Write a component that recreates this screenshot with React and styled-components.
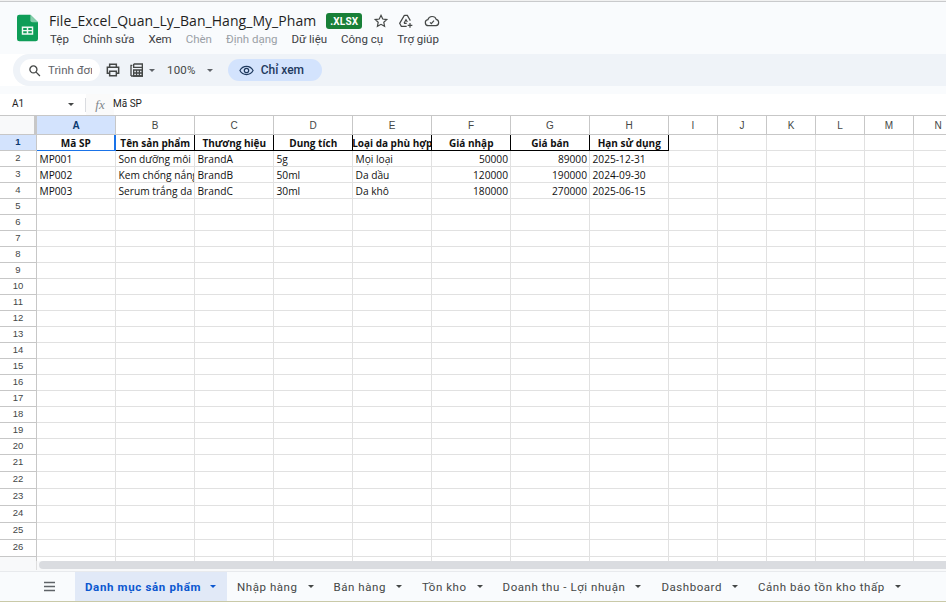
import React from 'react';
import styled, { createGlobalStyle } from 'styled-components';

const Global = createGlobalStyle`
  html, body { margin: 0; padding: 0; width: 946px; height: 602px; overflow: hidden; background: #fff; }
  * { box-sizing: border-box; }
  body { font-family: Roboto, "Liberation Sans", sans-serif; }
`;

const Page = styled.div`
  width: 946px; height: 602px; display: flex; flex-direction: column; overflow: hidden;
  border-top: 1px solid #f1f1f1; border-bottom: 1px solid #c9c9a8; background: #fff;
`;
const Header = styled.header`
  height: 53px; background: #f9fbfd; display: flex; align-items: flex-start; padding: 10px 0 0 17px; gap: 11px; flex: none;
  border-top: 1px solid #c9cacc;
`;
const Logo = styled.svg` width: 21px; height: 28px; flex: none; margin-top: 2px; `;
const TitleBlock = styled.div` display: flex; flex-direction: column; `;
const TitleRow = styled.div` display: flex; align-items: center; height: 18px; `;
const Title = styled.span` color: #1f1f1f; letter-spacing: 0.05px; font-family: "Open Sans", Roboto, sans-serif; font-size: 14px; margin-top: -2px; `;
const Badge = styled.span`
  margin-left: 10px; width: 36px; height: 16px; border-radius: 3px; background: #188038; color: #fff;
  font-size: 10px; font-weight: 700; display: flex; align-items: center; justify-content: center; letter-spacing: .2px;
`;
const TitleIcon = styled.svg` width: 16px; height: 16px; margin-left: ${p => p.$ml}px; flex: none; `;
const Menu = styled.nav` display: flex; gap: 14px; margin-top: 2px; padding-left: 1px; `;
const MenuItem = styled.span` font-size: 11.5px; color: ${p => p.$off ? '#9aa0a6' : '#3c4043'}; line-height: 14px; `;

const Toolbar = styled.div`
  height: 32px; flex: none; margin-left: 13px; background: #eff3f8; border-radius: 16px 0 0 16px;
  display: flex; align-items: center; padding-left: 7px;
`;
const SearchPill = styled.div`
  width: 80px; height: 22px; border-radius: 11px; background: #fff; display: flex; align-items: center; padding-left: 8px; gap: 7px; overflow: hidden;
`;
const SearchText = styled.span` font-size: 11.5px; color: #5f6368; white-space: nowrap; width: 44px; overflow: hidden; `;
const ToolIcon = styled.svg` flex: none; width: 16px; height: 16px; margin-left: ${p => p.$ml || 0}px; `;
const Caret = styled.i`
  display: block; flex: none; width: 0; height: 0; margin-left: ${p => p.$ml || 0}px;
  border-left: ${p => p.$s || 3}px solid transparent; border-right: ${p => p.$s || 3}px solid transparent;
  border-top: ${p => p.$s || 3}px solid ${p => p.$c || '#5f6368'};
`;
const Zoom = styled.span` font-size: 11.5px; color: #444746; margin-left: 12px; letter-spacing: .2px; `;
const ViewPill = styled.div`
  margin-left: 15px; width: 94px; height: 22px; border-radius: 11px; background: #d3e3fd; display: flex; align-items: center; padding-left: 11px; gap: 7px;
  font-size: 12px; font-weight: 500; color: #1f3a5f;
`;
const Gap = styled.div` height: 8px; flex: none; background: #f9fbfd; `;

const FormulaBar = styled.div`
  height: 21px; flex: none; background: #fff; display: flex; align-items: center; padding-left: 12px; color: #1f1f1f;
`;
const CellRef = styled.span` width: 56px; font-size: 10px; margin-top: -2px; `;
const FxDivider = styled.i` display: block; width: 1px; height: 14px; background: #dadce0; margin-left: 11px; `;
const FxBox = styled.span`
  width: 28px; height: 21px; background: #fafafa; font: italic 13px "Liberation Serif", serif; color: #80868b;
  display: flex; align-items: center; justify-content: center;
`;
const FxValue = styled.span` font-size: 10px; margin-left: -1px; margin-top: -2px; `;

const Grid = styled.div`
  height: 446px; flex: none; display: grid; align-content: start; background: #fff;
  grid-template-columns: 37px repeat(8, 79px) repeat(6, 49px);
  grid-template-rows: 19px repeat(20, 16px) repeat(6, 17px) 4px;
  border-top: 1px solid #c7c7c7; overflow: hidden;
`;
const Corner = styled.div` background: #f8f9fa; border-right: 3px solid #c7c7c7; border-bottom: 1px solid #c7c7c7; `;
const ColHead = styled.div`
  background: ${p => p.$active ? '#d3e3fd' : '#fff'}; border-right: 1px solid #c7c7c7; border-bottom: 1px solid #c7c7c7;
  display: flex; align-items: center; justify-content: center; font-size: 10px; color: ${p => p.$active ? '#0b3a70' : '#444746'};
  font-weight: ${p => p.$active ? 700 : 400}; font-family: "Liberation Sans", sans-serif;
`;
const RowHead = styled.div`
  background: ${p => p.$active ? '#d3e3fd' : '#fff'}; border-right: 1px solid #c7c7c7; border-bottom: 1px solid #c7c7c7;
  display: flex; align-items: center; justify-content: center; font-size: 9.5px; color: ${p => p.$active ? '#0b3a70' : '#444746'};
  font-weight: ${p => p.$active ? 700 : 400}; font-family: "Liberation Sans", sans-serif; padding-bottom: 3px;
`;
const Cell = styled.div`
  border-right: 1px solid ${p => p.$head ? '#000' : '#e1e1e1'}; border-bottom: 1px solid ${p => p.$head ? '#000' : '#e1e1e1'};
  font-size: ${p => p.$head ? 10 : 10.2}px; font-family: "Open Sans", sans-serif; color: #111; display: flex; align-items: center; overflow: hidden; white-space: nowrap;
  padding: 0 2px 0 2.5px; justify-content: ${p => p.$align || 'flex-start'};
  font-weight: ${p => p.$head ? 700 : 400};
  ${p => p.$selected && 'border-right: 2px solid #1a73e8; border-bottom: 1px solid #1a73e8;'}
`;
const Filler = styled.div` border-right: 1px solid #e1e1e1; `;
const FillerHead = styled.div` background: #f8f9fa; border-right: 1px solid #c7c7c7; `;

const ScrollRow = styled.div` height: 10px; flex: none; background: #f8f9fa; display: flex; `;
const ScrollCorner = styled.div` width: 37px; height: 9px; border-right: 1px solid #dedede; flex: none; `;
const Thumb = styled.div` flex: 1; height: 8px; margin-left: 2px; background: #dadce0; border-radius: 4px 0 0 4px; `;
const Tabs = styled.footer`
  height: 30px; flex: none; background: #f9fbfd; display: flex; align-items: stretch; border-top: 1px solid #e8eaed; padding-left: 43px;
`;
const Hamburger = styled.svg` width: 13px; height: 13px; align-self: center; flex: none; margin-right: 19px; `;
const Tab = styled.div`
  display: flex; align-items: center; gap: ${p => p.$active ? 9 : 10}px; padding: 0 ${p => p.$active ? 11 : 10}px 0 10px;
  background: ${p => p.$active ? '#e1e9f7' : 'transparent'}; color: ${p => p.$active ? '#0b57d0' : '#444746'};
  font-size: 11.5px; font-weight: ${p => p.$active ? 700 : 400}; letter-spacing: ${p => p.$active ? .65 : .55}px; white-space: nowrap;
`;

const columns = ['A','B','C','D','E','F','G','H','I','J','K','L','M','N'];
const head = ['Mã SP','Tên sản phẩm','Thương hiệu','Dung tích','Loại da phù hợp','Giá nhập','Giá bán','Hạn sử dụng'];
const data = [
  ['MP001','Son dưỡng môi','BrandA','5g','Mọi loại','50000','89000','2025-12-31'],
  ['MP002','Kem chống nắng','BrandB','50ml','Da dầu','120000','190000','2024-09-30'],
  ['MP003','Serum trắng da','BrandC','30ml','Da khô','180000','270000','2025-06-15'],
];
const menus = [['Tệp'],['Chỉnh sửa'],['Xem'],['Chèn',1],['Định dạng',1],['Dữ liệu'],['Công cụ'],['Trợ giúp']];
const tabs = ['Nhập hàng','Bán hàng','Tồn kho','Doanh thu - Lợi nhuận','Dashboard','Cảnh báo tồn kho thấp'];

export default function App() {
  return (
    <Page>
      <Global />
      <Header>
        <Logo viewBox="0 0 22 28">
          <path d="M2.5 0H14l8 8v17.5a2.5 2.5 0 0 1-2.5 2.5h-17A2.5 2.5 0 0 1 0 25.500v-23A2.500 2.500 0 0 1 2.500 0z" fill="#0f9d58"/>
          <path d="M14 0l8 8h-6a2 2 0 0 1-2-2z" fill="#87ceac"/>
          <path d="M5 12.500h12v8.500H5z M6.500 14v2h3.700v-2z M11.800 14v2h3.700v-2z M6.500 17.500v2h3.700v-2z M11.800 17.500v2h3.700v-2z" fill="#f1f8f4" fillRule="evenodd"/>
        </Logo>
        <TitleBlock>
          <TitleRow>
            <Title>File_Excel_Quan_Ly_Ban_Hang_My_Pham</Title>
            <Badge>.XLSX</Badge>
            <TitleIcon $ml={11} viewBox="0 0 24 24" fill="none" stroke="#444746" strokeWidth="1.800"><path d="M12 3.500l2.600 5.600 6.100.7-4.500 4.200 1.200 6-5.400-3-5.400 3 1.200-6-4.500-4.200 6.100-.7z"/></TitleIcon>
            <TitleIcon $ml={9} viewBox="0 0 24 24" fill="none" stroke="#444746" strokeWidth="1.800"><path d="M9.500 3.500h4.500l4.500 8M9.500 3.500L2.500 15.500 5 20h8M9 15.500l3-5.500 2 3.500M9 15.500h4"/><path d="M18 15v7M14.500 18.500h7"/></TitleIcon>
            <TitleIcon $ml={10} viewBox="0 0 24 24" fill="none" stroke="#444746" strokeWidth="1.800"><path d="M6.500 19a4.500 4.500 0 0 1-.6-8.960A6.500 6.500 0 0 1 18.300 9.600 4.800 4.800 0 0 1 18 19z"/><path d="M9 14l2 2 4-4.500"/></TitleIcon>
          </TitleRow>
          <Menu>{menus.map(([m, off]) => <MenuItem key={m} $off={off}>{m}</MenuItem>)}</Menu>
        </TitleBlock>
      </Header>
      <Toolbar>
        <SearchPill>
          <svg width="13" height="13" viewBox="0 0 24 24" fill="none" stroke="#444746" strokeWidth="2.400"><circle cx="10" cy="10" r="6.500"/><path d="M15 15l7 7"/></svg>
          <SearchText>Trình đơn</SearchText>
        </SearchPill>
        <ToolIcon $ml={5} viewBox="0 0 24 24" fill="none" stroke="#444746" strokeWidth="2.200"><path d="M7 8V3.500h10V8M7 17H3.500v-9h17v9H17"/><path d="M7 14h10v6.500H7z"/></ToolIcon>
        <ToolIcon $ml={8} viewBox="0 0 24 24" fill="none" stroke="#444746" strokeWidth="2"><path d="M3 21V5h2M7 3h13v18H3"/><path d="M7 3v5h13M7 12h13v9H7zM11.300 12v9M15.600 12v9M7 16.500h13"/></ToolIcon>
        <Caret $ml={4} />
        <Zoom>100%</Zoom>
        <Caret $ml={11} />
        <ViewPill>
          <svg width="15" height="15" viewBox="0 0 24 24" fill="none" stroke="#1f3a5f" strokeWidth="2"><path d="M1.500 12C4 7.500 8 5.500 12 5.500s8 2 10.500 6.500c-2.500 4.500-6.500 6.500-10.500 6.500S4 16.500 1.500 12z"/><circle cx="12" cy="12" r="3.500"/></svg>
          Chỉ xem
        </ViewPill>
      </Toolbar>
      <Gap />
      <FormulaBar>
        <CellRef>A1</CellRef>
        <Caret $s={3} $c="#444746" />
        <FxDivider />
        <FxBox>fx</FxBox>
        <FxValue>Mã SP</FxValue>
      </FormulaBar>
      <Grid>
        <Corner />
        {columns.map((c, i) => <ColHead key={c} $active={i === 0}>{c}</ColHead>)}
        {Array.from({ length: 26 }, (_, r) => (
          <React.Fragment key={r}>
            <RowHead $active={r === 0}>{r + 1}</RowHead>
            {columns.map((c, i) => {
              if (r === 0 && i < 8) {
                return <Cell key={c} $head $align="center" $selected={i === 0}>{head[i]}</Cell>;
              }
              const v = r >= 1 && r <= 3 && i < 8 ? data[r - 1][i] : '';
              return <Cell key={c} $align={i === 5 || i === 6 ? 'flex-end' : 'flex-start'}>{v}</Cell>;
            })}
          </React.Fragment>
        ))}
        <FillerHead />
        {columns.map(c => <Filler key={c} />)}
      </Grid>
      <ScrollRow><ScrollCorner /><Thumb /></ScrollRow>
      <Tabs>
        <Hamburger viewBox="0 0 13 13" fill="none" stroke="#5f6368" strokeWidth="1.500"><path d="M1 2.500h11M1 6.500h11M1 10.500h11"/></Hamburger>
        <Tab $active>Danh mục sản phẩm<Caret $c="#0b57d0" /></Tab>
        {tabs.map(t => <Tab key={t}>{t}<Caret $c="#444746" /></Tab>)}
      </Tabs>
    </Page>
  );
}
